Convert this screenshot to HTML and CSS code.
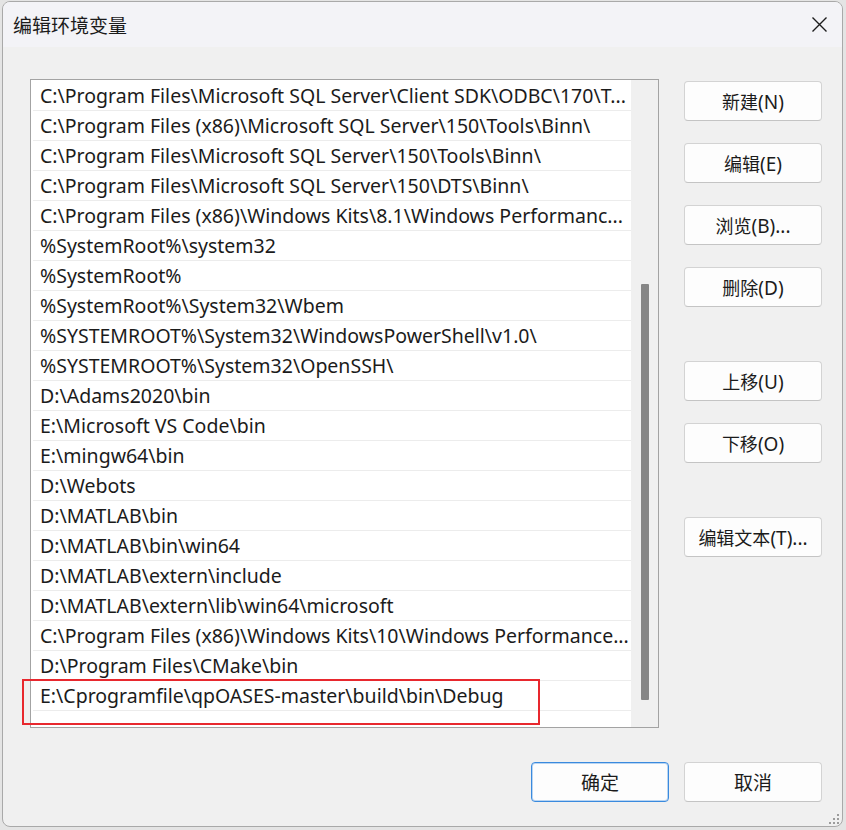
FILE: index.html
```
<!DOCTYPE html>
<html lang="zh-CN">
<head>
    <meta charset="UTF-8">
    <title>编辑环境变量</title>
    <link rel="stylesheet" href="styles.css">
</head>
<body>
    <div class="window">
        <div class="titlebar">
            <span class="title">编辑环境变量</span>
            <svg class="close" width="15" height="15" viewBox="0 0 15 15">
                <path d="M0.5 0.5 L14.5 14.5 M14.5 0.5 L0.5 14.5" stroke="#1c1c1c" stroke-width="1.4" fill="none"/>
            </svg>
        </div>

        <div class="content">
            <div class="listbox">
                <ul class="rows">
                    <li>C:\Program Files\Microsoft SQL Server\Client SDK\ODBC\170\T...</li>
                    <li>C:\Program Files (x86)\Microsoft SQL Server\150\Tools\Binn\</li>
                    <li>C:\Program Files\Microsoft SQL Server\150\Tools\Binn\</li>
                    <li>C:\Program Files\Microsoft SQL Server\150\DTS\Binn\</li>
                    <li>C:\Program Files (x86)\Windows Kits\8.1\Windows Performanc...</li>
                    <li>%SystemRoot%\system32</li>
                    <li>%SystemRoot%</li>
                    <li>%SystemRoot%\System32\Wbem</li>
                    <li>%SYSTEMROOT%\System32\WindowsPowerShell\v1.0\</li>
                    <li>%SYSTEMROOT%\System32\OpenSSH\</li>
                    <li>D:\Adams2020\bin</li>
                    <li>E:\Microsoft VS Code\bin</li>
                    <li>E:\mingw64\bin</li>
                    <li>D:\Webots</li>
                    <li>D:\MATLAB\bin</li>
                    <li>D:\MATLAB\bin\win64</li>
                    <li>D:\MATLAB\extern\include</li>
                    <li>D:\MATLAB\extern\lib\win64\microsoft</li>
                    <li>C:\Program Files (x86)\Windows Kits\10\Windows Performance...</li>
                    <li>D:\Program Files\CMake\bin</li>
                    <li>E:\Cprogramfile\qpOASES-master\build\bin\Debug</li>
                    <li></li>
                </ul>
                <div class="scrollbar">
                    <div class="thumb"></div>
                </div>
                <!-- red box drawn over the newly added entry -->
                <div class="mark"></div>
            </div>

            <div class="side">
                <div class="group">
                    <button class="btn"><span class="cjk">新建</span>(N)</button>
                    <button class="btn"><span class="cjk">编辑</span>(E)</button>
                    <button class="btn"><span class="cjk">浏览</span>(B)...</button>
                    <button class="btn"><span class="cjk">删除</span>(D)</button>
                </div>
                <div class="group">
                    <button class="btn"><span class="cjk">上移</span>(U)</button>
                    <button class="btn"><span class="cjk">下移</span>(O)</button>
                </div>
                <div class="group">
                    <button class="btn"><span class="cjk">编辑文本</span>(T)...</button>
                </div>
            </div>
        </div>

        <div class="footer">
            <button class="btn default"><span class="cjk">确定</span></button>
            <button class="btn"><span class="cjk">取消</span></button>
        </div>

        <svg class="grip" width="12" height="12" viewBox="0 0 12 12">
            <rect x="9" y="1" width="2" height="2" fill="#9c9c9c"/>
            <rect x="5" y="5" width="2" height="2" fill="#9c9c9c"/>
            <rect x="9" y="5" width="2" height="2" fill="#9c9c9c"/>
            <rect x="1" y="9" width="2" height="2" fill="#9c9c9c"/>
            <rect x="5" y="9" width="2" height="2" fill="#9c9c9c"/>
            <rect x="9" y="9" width="2" height="2" fill="#9c9c9c"/>
        </svg>
    </div>
</body>
</html>
```

FILE: styles.css
```
body {
    margin: 0;
    padding: 1px 0 0 2px;
    background: #e4e4e4;
    font-family: 'Noto Sans', 'Noto Sans CJK SC', sans-serif;
    color: #1b1b1b;
}

.window {
    position: relative;
    box-sizing: border-box;
    width: 841px;
    height: 826px;
    background: #f0f0f0;
    border: 1px solid #a9a9a9;
    border-radius: 8px;
    overflow: hidden;
}

.titlebar {
    height: 45px;
    display: flex;
    align-items: center;
    justify-content: space-between;
    padding: 0 15px 0 10px;
    background: #f3f3f7;
}

.title {
    font-family: 'Noto Sans CJK SC', sans-serif;
    font-size: 19px;
}

.content {
    display: flex;
    padding: 32px 0 0 27px;
}

.listbox {
    position: relative;
    display: flex;
    box-sizing: border-box;
    width: 629px;
    height: 649px;
    background: #fff;
    border: 1px solid #a3a3a3;
}

.rows {
    list-style: none;
    margin: 0;
    padding: 1px 0 0 2px;
    width: 600px;
    overflow: hidden;
}

.rows li {
    box-sizing: border-box;
    height: 30px;
    line-height: 30px;
    padding-left: 7px;
    border-bottom: 1px solid #ececec;
    font-size: 19.5px;
    white-space: nowrap;
    overflow: hidden;
}

.scrollbar {
    width: 27px;
    background: #f0f0f0;
}

.thumb {
    width: 8px;
    height: 416px;
    margin: 204px 0 0 10px;
    background: #868686;
    border-radius: 1px;
}

.mark {
    position: absolute;
    left: -9px;
    top: 599px;
    width: 518px;
    height: 46px;
    box-sizing: border-box;
    border: 2.5px solid #e8282e;
}

.side {
    display: flex;
    flex-direction: column;
    gap: 54px;
    margin: 2px 0 0 25px;
}

.group {
    display: flex;
    flex-direction: column;
    gap: 22px;
}

.btn {
    box-sizing: border-box;
    width: 138px;
    height: 40px;
    padding: 0;
    background: #fdfdfd;
    border: 1px solid #d3d3d3;
    border-bottom-color: #c4c4c4;
    border-radius: 4px;
    font-family: 'Noto Sans', 'Noto Sans CJK SC', sans-serif;
    font-size: 19px;
    color: #1b1b1b;
}

.btn .cjk {
    font-family: 'Noto Sans CJK SC', sans-serif;
    font-size: 18px;
}

.btn.default {
    border: 1px solid #3a8ade;
    box-shadow: inset 0 0 0 1px rgba(58, 138, 222, 0.35);
}

.footer .btn .cjk {
    font-size: 19px;
}

.footer {
    display: flex;
    justify-content: flex-end;
    gap: 15px;
    padding: 34px 20px 0 0;
}

.grip {
    position: absolute;
    right: 2px;
    bottom: 1px;
}
```
